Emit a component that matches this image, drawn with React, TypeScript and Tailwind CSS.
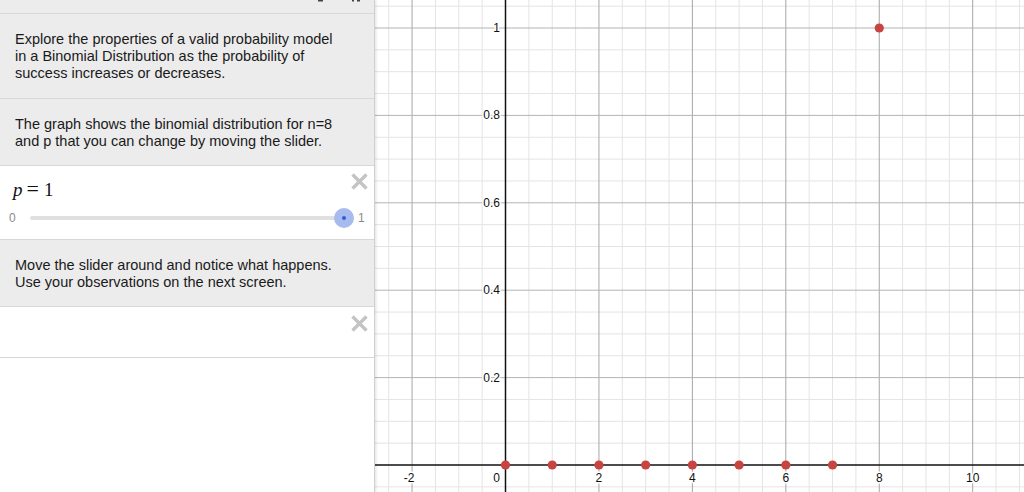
import React from "react";

const OX = 505.5;
const OY = 465;
const UX = 46.72;
const UY = 437;

const px = (v: number) => OX + v * UX;
const py = (v: number) => OY - v * UY;

function Graph() {
  const minorV: number[] = [];
  const majorV: number[] = [];
  for (let k = -6; k <= 24; k++) {
    const x = px(k * 0.5);
    if (k === 0) continue;
    if (k % 4 === 0) majorV.push(x);
    else minorV.push(x);
  }
  const minorH: number[] = [];
  const majorH: number[] = [];
  for (let j = -2; j <= 22; j++) {
    const y = py(j * 0.05);
    if (j === 0) continue;
    if (j % 4 === 0) majorH.push(y);
    else minorH.push(y);
  }
  const yLabels = [
    { v: 1, t: "1" },
    { v: 0.8, t: "0.8" },
    { v: 0.6, t: "0.6" },
    { v: 0.4, t: "0.4" },
    { v: 0.2, t: "0.2" },
  ];
  const xLabels = [2, 4, 6, 8, 10];
  const pts: [number, number][] = [
    [0, 0],
    [1, 0],
    [2, 0],
    [3, 0],
    [4, 0],
    [5, 0],
    [6, 0],
    [7, 0],
    [8, 1],
  ];
  const labelStyle = {
    fontFamily: '"Liberation Sans", Arial, sans-serif',
    fontSize: 12,
    fill: "#111",
    stroke: "#fff",
    strokeWidth: 3,
    paintOrder: "stroke" as const,
    strokeLinejoin: "round" as const,
  };
  return (
    <svg
      className="block h-[492px] flex-1"
      width={649}
      height={492}
      viewBox="375 0 649 492"
    >
      <rect x={375} y={0} width={649} height={492} fill="#fff" />
      {minorV.map((x, i) => (
        <line key={"mv" + i} x1={x} x2={x} y1={0} y2={492} stroke="#e4e4e4" strokeWidth={1} />
      ))}
      {minorH.map((y, i) => (
        <line key={"mh" + i} x1={375} x2={1024} y1={y} y2={y} stroke="#e4e4e4" strokeWidth={1} />
      ))}
      {majorV.map((x, i) => (
        <line key={"Mv" + i} x1={x} x2={x} y1={0} y2={492} stroke="#a6a6a6" strokeWidth={1} />
      ))}
      {majorH.map((y, i) => (
        <line key={"Mh" + i} x1={375} x2={1024} y1={y} y2={y} stroke="#b4b4b4" strokeWidth={1} />
      ))}
      <line x1={375} x2={1024} y1={OY} y2={OY} stroke="#111" strokeWidth={1.5} />
      <line x1={OX} x2={OX} y1={0} y2={492} stroke="#111" strokeWidth={1.5} />
      {yLabels.map((l) => (
        <text
          key={l.t}
          x={500}
          y={py(l.v)}
          textAnchor="end"
          dominantBaseline="central"
          style={labelStyle}
        >
          {l.t}
        </text>
      ))}
      <text x={409} y={482} textAnchor="middle" style={labelStyle}>
        -2
      </text>
      <text x={500} y={482} textAnchor="end" style={labelStyle}>
        0
      </text>
      {xLabels.map((v) => (
        <text key={v} x={px(v)} y={482} textAnchor="middle" style={labelStyle}>
          {v}
        </text>
      ))}
      {pts.map(([a, b], i) => (
        <circle key={i} cx={px(a)} cy={py(b)} r={4.6} fill="#c74440" />
      ))}
    </svg>
  );
}

function CloseX() {
  return (
    <svg width={17} height={17} viewBox="0 0 17 17" className="block">
      <path d="M1.5 1.5 L15.5 15.5 M15.5 1.5 L1.5 15.5" stroke="#c4c4c4" strokeWidth={3.4} />
    </svg>
  );
}

export default function App() {
  const sans = { fontFamily: '"Liberation Sans", Arial, Helvetica, sans-serif' };
  const serif = { fontFamily: '"Liberation Serif", "Times New Roman", serif' };
  return (
    <div className="flex h-[492px] w-[1024px] overflow-hidden bg-white" style={sans}>
      <div className="relative z-10 flex w-[375px] shrink-0 flex-col border-r border-[#d0d0d0] bg-white shadow-[1px_0_3px_rgba(0,0,0,0.12)]">
        <div className="h-[14px] shrink-0 border-b border-[#d8d8d8] bg-[#ececec]">
          <svg width={374} height={13} className="block">
            <rect x={318} y={0} width={5} height={1.5} fill="#444" />
            <rect x={352} y={0} width={2} height={1.5} fill="#444" />
            <rect x={357} y={0} width={3} height={1.5} fill="#444" />
          </svg>
        </div>
        <div className="shrink-0 border-b border-[#d8d8d8] bg-[#ececec] px-[15px] pb-[16px] pt-[17px] text-[14.5px] leading-[17px] text-[#1a1a1a]">
          Explore the properties of a valid probability model
          <br />
          in a Binomial Distribution as the probability of
          <br />
          success increases or decreases.
        </div>
        <div className="shrink-0 border-b border-[#d8d8d8] bg-[#ececec] px-[15px] pb-[15px] pt-[17px] text-[14.5px] leading-[17px] text-[#1a1a1a]">
          The graph shows the binomial distribution for n=8
          <br />
          and p that you can change by moving the slider.
        </div>
        <div className="relative shrink-0 border-b border-[#d8d8d8] bg-white pb-[11px] pt-[11px]">
          <div className="flex h-[24px] items-baseline pl-[13px] text-[19px] leading-[24px] text-[#111]" style={serif}>
            <span className="italic">p</span>
            <span className="ml-[4px] mr-[5px] inline-block text-[22px] leading-[24px]">=</span>
            <span>1</span>
          </div>
          <div className="mt-[7px] flex h-[20px] items-center pl-[9px] text-[12px] text-[#8a8a8a]">
            <span className="w-[7px]">0</span>
            <div className="relative ml-[14px] h-[4px] w-[314px] rounded-full bg-[#e0e0e0]">
              <div className="absolute right-[-10px] top-[-8px] flex h-[20px] w-[20px] items-center justify-center rounded-full bg-[#a8bbee]">
                <div className="h-[4px] w-[4px] rounded-full bg-[#2d5fd6]" />
              </div>
            </div>
            <span className="ml-[14px]">1</span>
          </div>
          <div className="absolute right-[6px] top-[7px]">
            <CloseX />
          </div>
        </div>
        <div className="shrink-0 border-b border-[#d8d8d8] bg-[#ececec] px-[15px] pb-[15px] pt-[17px] text-[14.5px] leading-[17px] text-[#1a1a1a]">
          Move the slider around and notice what happens.
          <br />
          Use your observations on the next screen.
        </div>
        <div className="relative h-[51px] shrink-0 border-b border-[#d8d8d8] bg-white">
          <div className="absolute right-[6px] top-[8px]">
            <CloseX />
          </div>
        </div>
        <div className="flex-1 bg-white" />
      </div>
      <Graph />
    </div>
  );
}
